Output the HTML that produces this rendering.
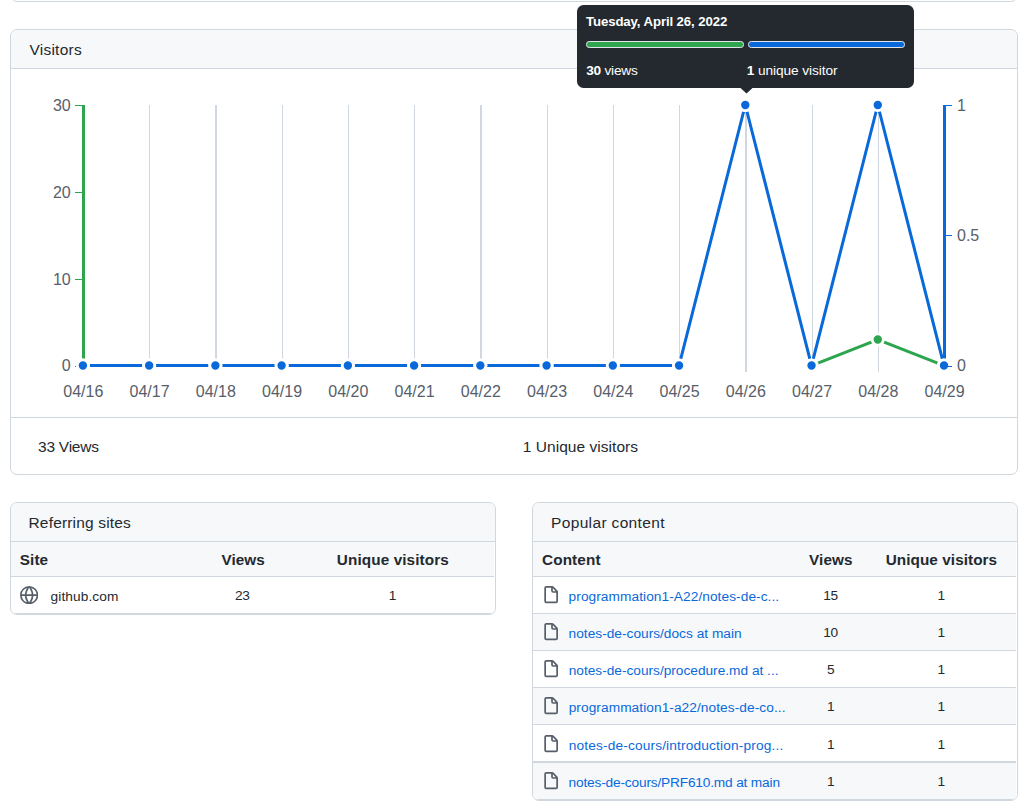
<!DOCTYPE html>
<html><head><meta charset="utf-8"><title>Traffic</title>
<style>
html,body{margin:0;padding:0;background:#fff}
body{width:1030px;height:808px;position:relative;overflow:hidden;font-family:"Liberation Sans",sans-serif;color:#24292f}
.box{position:absolute;box-sizing:border-box;border:1px solid #d0d7de;border-radius:7px;background:#fff}
.hd{position:absolute;left:0;right:0;top:0;background:#f6f8fa;border-bottom:1px solid #d0d7de;border-radius:6px 6px 0 0;box-sizing:border-box}
.t{position:absolute;white-space:nowrap;line-height:20px;font-size:13.7px}
.b{font-weight:bold}
.lnk{color:#0969da}
.tip{color:#fff}
.ax{font-family:"Liberation Sans",sans-serif;font-size:16px;fill:#57606a}
#tip{position:absolute;left:577px;top:5px;width:337px;height:83px;background:#24292f;border-radius:6.5px;color:#fff}
.bar{position:absolute;top:36px;height:7px;box-sizing:border-box;border:1px solid #e1e4e8;border-radius:3.2px}
</style></head><body>
<div class="box" style="left:10px;top:-30px;width:1008px;height:32px"></div>

<div class="box" id="vis" style="left:10px;top:29px;width:1008px;height:446px">
  <div class="hd" style="height:39px"></div>
  <div style="position:absolute;left:0;right:0;top:387px;border-top:1px solid #d0d7de"></div>
</div>
<svg id="chart" width="1030" height="420" viewBox="0 0 1030 420" style="position:absolute;left:0;top:0;overflow:visible">
<rect x="149" y="105" width="1" height="267" fill="#d0d7de"/>
<rect x="215" y="105" width="2" height="267" fill="#d0d7de"/>
<rect x="282" y="105" width="1" height="267" fill="#d0d7de"/>
<rect x="348" y="105" width="1" height="267" fill="#d0d7de"/>
<rect x="414" y="105" width="1" height="267" fill="#d0d7de"/>
<rect x="480" y="105" width="2" height="267" fill="#d0d7de"/>
<rect x="547" y="105" width="1" height="267" fill="#d0d7de"/>
<rect x="613" y="105" width="1" height="267" fill="#d0d7de"/>
<rect x="679" y="105" width="1" height="267" fill="#d0d7de"/>
<rect x="745" y="105" width="2" height="267" fill="#d0d7de"/>
<rect x="812" y="105" width="1" height="267" fill="#d0d7de"/>
<rect x="878" y="105" width="1" height="267" fill="#d0d7de"/>
<rect x="82" y="105" width="3" height="262" fill="#2da44e"/>
<rect x="75" y="105" width="8" height="1" fill="#2da44e"/>
<rect x="75" y="192" width="8" height="1" fill="#2da44e"/>
<rect x="75" y="279" width="8" height="1" fill="#2da44e"/>
<rect x="75" y="366" width="8" height="1" fill="#2da44e"/>
<rect x="943" y="105" width="3" height="262" fill="#0969da"/>
<rect x="945" y="105" width="7" height="1" fill="#0969da"/>
<rect x="945" y="235" width="7" height="1" fill="#0969da"/>
<text x="70.7" y="110.7" text-anchor="end" class="ax">30</text>
<text x="70.7" y="197.7" text-anchor="end" class="ax">20</text>
<text x="70.7" y="284.7" text-anchor="end" class="ax">10</text>
<text x="70.7" y="370.7" text-anchor="end" class="ax">0</text>
<text x="957" y="110.7" text-anchor="start" class="ax">1</text>
<text x="957" y="240.7" text-anchor="start" class="ax">0.5</text>
<text x="957" y="370.7" text-anchor="start" class="ax">0</text>
<text x="83.30" y="396.6" text-anchor="middle" class="ax">04/16</text>
<text x="149.55" y="396.6" text-anchor="middle" class="ax">04/17</text>
<text x="215.80" y="396.6" text-anchor="middle" class="ax">04/18</text>
<text x="282.05" y="396.6" text-anchor="middle" class="ax">04/19</text>
<text x="348.30" y="396.6" text-anchor="middle" class="ax">04/20</text>
<text x="414.55" y="396.6" text-anchor="middle" class="ax">04/21</text>
<text x="480.80" y="396.6" text-anchor="middle" class="ax">04/22</text>
<text x="547.05" y="396.6" text-anchor="middle" class="ax">04/23</text>
<text x="613.30" y="396.6" text-anchor="middle" class="ax">04/24</text>
<text x="679.55" y="396.6" text-anchor="middle" class="ax">04/25</text>
<text x="745.80" y="396.6" text-anchor="middle" class="ax">04/26</text>
<text x="812.05" y="396.6" text-anchor="middle" class="ax">04/27</text>
<text x="878.30" y="396.6" text-anchor="middle" class="ax">04/28</text>
<text x="944.55" y="396.6" text-anchor="middle" class="ax">04/29</text>
<polyline points="811.54,365.55 877.78,339.50 944.02,365.55" fill="none" stroke="#2da44e" stroke-width="3" stroke-linejoin="miter"/>
<polyline points="82.90,365.55 149.14,365.55 215.38,365.55 281.62,365.55 347.86,365.55 414.10,365.55 480.34,365.55 546.58,365.55 612.82,365.55 679.06,365.55 745.30,105.00 811.54,365.55 877.78,105.00 944.02,365.55" fill="none" stroke="#0969da" stroke-width="3" stroke-linejoin="miter"/>
<circle cx="82.90" cy="365.55" r="5.6" fill="#2da44e" stroke="#fff" stroke-width="2.8"/>
<circle cx="149.14" cy="365.55" r="5.6" fill="#2da44e" stroke="#fff" stroke-width="2.8"/>
<circle cx="215.38" cy="365.55" r="5.6" fill="#2da44e" stroke="#fff" stroke-width="2.8"/>
<circle cx="281.62" cy="365.55" r="5.6" fill="#2da44e" stroke="#fff" stroke-width="2.8"/>
<circle cx="347.86" cy="365.55" r="5.6" fill="#2da44e" stroke="#fff" stroke-width="2.8"/>
<circle cx="414.10" cy="365.55" r="5.6" fill="#2da44e" stroke="#fff" stroke-width="2.8"/>
<circle cx="480.34" cy="365.55" r="5.6" fill="#2da44e" stroke="#fff" stroke-width="2.8"/>
<circle cx="546.58" cy="365.55" r="5.6" fill="#2da44e" stroke="#fff" stroke-width="2.8"/>
<circle cx="612.82" cy="365.55" r="5.6" fill="#2da44e" stroke="#fff" stroke-width="2.8"/>
<circle cx="679.06" cy="365.55" r="5.6" fill="#2da44e" stroke="#fff" stroke-width="2.8"/>
<circle cx="745.30" cy="105.00" r="5.6" fill="#2da44e" stroke="#fff" stroke-width="2.8"/>
<circle cx="811.54" cy="365.55" r="5.6" fill="#2da44e" stroke="#fff" stroke-width="2.8"/>
<circle cx="877.78" cy="339.50" r="5.6" fill="#2da44e" stroke="#fff" stroke-width="2.8"/>
<circle cx="944.02" cy="365.55" r="5.6" fill="#2da44e" stroke="#fff" stroke-width="2.8"/>
<circle cx="82.90" cy="365.55" r="5.6" fill="#0969da" stroke="#fff" stroke-width="2.8"/>
<circle cx="149.14" cy="365.55" r="5.6" fill="#0969da" stroke="#fff" stroke-width="2.8"/>
<circle cx="215.38" cy="365.55" r="5.6" fill="#0969da" stroke="#fff" stroke-width="2.8"/>
<circle cx="281.62" cy="365.55" r="5.6" fill="#0969da" stroke="#fff" stroke-width="2.8"/>
<circle cx="347.86" cy="365.55" r="5.6" fill="#0969da" stroke="#fff" stroke-width="2.8"/>
<circle cx="414.10" cy="365.55" r="5.6" fill="#0969da" stroke="#fff" stroke-width="2.8"/>
<circle cx="480.34" cy="365.55" r="5.6" fill="#0969da" stroke="#fff" stroke-width="2.8"/>
<circle cx="546.58" cy="365.55" r="5.6" fill="#0969da" stroke="#fff" stroke-width="2.8"/>
<circle cx="612.82" cy="365.55" r="5.6" fill="#0969da" stroke="#fff" stroke-width="2.8"/>
<circle cx="679.06" cy="365.55" r="5.6" fill="#0969da" stroke="#fff" stroke-width="2.8"/>
<circle cx="745.30" cy="105.00" r="5.6" fill="#0969da" stroke="#fff" stroke-width="2.8"/>
<circle cx="811.54" cy="365.55" r="5.6" fill="#0969da" stroke="#fff" stroke-width="2.8"/>
<circle cx="877.78" cy="105.00" r="5.6" fill="#0969da" stroke="#fff" stroke-width="2.8"/>
<circle cx="944.02" cy="365.55" r="5.6" fill="#0969da" stroke="#fff" stroke-width="2.8"/>
<rect x="945" y="366" width="7" height="1" fill="#0969da"/>
</svg>

<div id="tip">
  <div class="bar" style="left:9px;width:158px;background:#2da44e"></div>
  <div class="bar" style="left:171px;width:157px;background:#0969da"></div>
  <svg style="position:absolute;left:160px;top:83px;overflow:visible" width="20" height="8" viewBox="0 0 20 8"><polygon points="3.5,-0.5 15.5,-0.5 15.5,0 9.5,5.4 3.5,0" fill="#24292f"/></svg>
</div>

<div class="box" id="ref" style="left:10px;top:502px;width:486px;height:113px;overflow:hidden">
  <div class="hd" style="height:74px"></div>
  <div style="position:absolute;left:0;right:0;top:38px;border-top:1px solid #d0d7de"></div>
  <div style="position:absolute;left:0;right:0;top:110px;border-top:1px solid #d0d7de"></div>
  <div style="position:absolute;right:0;width:1px;top:39px;bottom:0;background:#fff"></div>
</div>
<svg style="position:absolute;left:19.8px;top:585.8px" width="18.29" height="18.29" viewBox="0 0 16 16"><path fill="#57606a" fill-rule="evenodd" d="M1.543 7.25h2.733c.144-2.074.866-3.756 1.580-4.948.12-.197.237-.381.353-.552a6.506 6.506 0 0 0-4.666 5.500zm2.733 1.500H1.543a6.506 6.506 0 0 0 4.666 5.500 11.130 11.130 0 0 1-.352-.552c-.715-1.192-1.437-2.874-1.581-4.948zm1.504 0h4.440a9.637 9.637 0 0 1-1.363 4.177c-.306.510-.612.919-.857 1.215a9.978 9.978 0 0 1-.857-1.215A9.637 9.637 0 0 1 5.780 8.750zm4.440-1.500H5.780a9.637 9.637 0 0 1 1.363-4.177c.306-.510.612-.919.857-1.215.245.296.550.705.857 1.215A9.638 9.638 0 0 1 10.220 7.250zm1.504 1.500c-.144 2.074-.866 3.756-1.580 4.948-.12.197-.237.381-.353.552a6.506 6.506 0 0 0 4.666-5.500h-2.733zm2.733-1.500h-2.733c-.144-2.074-.866-3.756-1.580-4.948a11.738 11.738 0 0 0-.353-.552 6.506 6.506 0 0 1 4.666 5.500zM8 0a8 8 0 1 0 0 16A8 8 0 0 0 8 0z"/></svg>

<div class="box" id="pop" style="left:532px;top:502px;width:486px;height:299px;overflow:hidden">
  <div class="hd" style="height:74px"></div>
  <div style="position:absolute;left:0;right:0;top:38px;border-top:1px solid #d0d7de"></div>
  <svg style="position:absolute;left:-533px;top:-503px" width="1030" height="808" viewBox="0 0 1030 808">
<rect x="533" y="577" width="484" height="36" fill="#fff"/>
<rect x="533" y="613" width="484" height="1" fill="#d0d7de"/>
<rect x="533" y="614" width="484" height="36" fill="#f6f8fa"/>
<rect x="533" y="650" width="484" height="1" fill="#d0d7de"/>
<rect x="533" y="651" width="484" height="36" fill="#fff"/>
<rect x="533" y="687" width="484" height="1" fill="#d0d7de"/>
<rect x="533" y="688" width="484" height="36" fill="#f6f8fa"/>
<rect x="533" y="724" width="484" height="1" fill="#d0d7de"/>
<rect x="533" y="725" width="484" height="36" fill="#fff"/>
<rect x="533" y="761" width="484" height="2" fill="#d0d7de"/>
<rect x="533" y="763" width="484" height="36" fill="#f6f8fa"/>
<rect x="533" y="799" width="484" height="1" fill="#d0d7de"/>
<rect x="1016" y="542" width="1" height="258" fill="#fff"/>
</svg>
</div>
<svg style="position:absolute;left:541.9px;top:585.90px" width="18.29" height="18.29" viewBox="0 0 16 16"><path fill="#57606a" fill-rule="evenodd" d="M3.750 1.500a.250.250 0 0 0-.250.250v11.500c0 .138.112.250.250.250h8.500a.250.250 0 0 0 .250-.250V6H9.750A1.750 1.750 0 0 1 8 4.250V1.500H3.750zm5.750.560v2.190c0 .138.112.250.250.250h2.190L9.500 2.060zM2 1.750C2 .784 2.784 0 3.750 0h5.086c.464 0 .909.184 1.237.513l3.414 3.414c.329.328.513.773.513 1.237v8.086A1.750 1.750 0 0 1 12.250 15h-8.500A1.750 1.750 0 0 1 2 13.250V1.750z"/></svg>
<svg style="position:absolute;left:541.9px;top:623.07px" width="18.29" height="18.29" viewBox="0 0 16 16"><path fill="#57606a" fill-rule="evenodd" d="M3.750 1.500a.250.250 0 0 0-.250.250v11.500c0 .138.112.250.250.250h8.500a.250.250 0 0 0 .250-.250V6H9.750A1.750 1.750 0 0 1 8 4.250V1.500H3.750zm5.750.560v2.190c0 .138.112.250.250.250h2.190L9.500 2.060zM2 1.750C2 .784 2.784 0 3.750 0h5.086c.464 0 .909.184 1.237.513l3.414 3.414c.329.328.513.773.513 1.237v8.086A1.750 1.750 0 0 1 12.250 15h-8.500A1.750 1.750 0 0 1 2 13.250V1.750z"/></svg>
<svg style="position:absolute;left:541.9px;top:660.24px" width="18.29" height="18.29" viewBox="0 0 16 16"><path fill="#57606a" fill-rule="evenodd" d="M3.750 1.500a.250.250 0 0 0-.250.250v11.500c0 .138.112.250.250.250h8.500a.250.250 0 0 0 .250-.250V6H9.750A1.750 1.750 0 0 1 8 4.250V1.500H3.750zm5.750.560v2.190c0 .138.112.250.250.250h2.190L9.500 2.060zM2 1.750C2 .784 2.784 0 3.750 0h5.086c.464 0 .909.184 1.237.513l3.414 3.414c.329.328.513.773.513 1.237v8.086A1.750 1.750 0 0 1 12.250 15h-8.500A1.750 1.750 0 0 1 2 13.250V1.750z"/></svg>
<svg style="position:absolute;left:541.9px;top:697.41px" width="18.29" height="18.29" viewBox="0 0 16 16"><path fill="#57606a" fill-rule="evenodd" d="M3.750 1.500a.250.250 0 0 0-.250.250v11.500c0 .138.112.250.250.250h8.500a.250.250 0 0 0 .250-.250V6H9.750A1.750 1.750 0 0 1 8 4.250V1.500H3.750zm5.750.560v2.190c0 .138.112.250.250.250h2.190L9.500 2.060zM2 1.750C2 .784 2.784 0 3.750 0h5.086c.464 0 .909.184 1.237.513l3.414 3.414c.329.328.513.773.513 1.237v8.086A1.750 1.750 0 0 1 12.250 15h-8.500A1.750 1.750 0 0 1 2 13.250V1.750z"/></svg>
<svg style="position:absolute;left:541.9px;top:734.58px" width="18.29" height="18.29" viewBox="0 0 16 16"><path fill="#57606a" fill-rule="evenodd" d="M3.750 1.500a.250.250 0 0 0-.250.250v11.500c0 .138.112.250.250.250h8.500a.250.250 0 0 0 .250-.250V6H9.750A1.750 1.750 0 0 1 8 4.250V1.500H3.750zm5.750.560v2.190c0 .138.112.250.250.250h2.190L9.500 2.060zM2 1.750C2 .784 2.784 0 3.750 0h5.086c.464 0 .909.184 1.237.513l3.414 3.414c.329.328.513.773.513 1.237v8.086A1.750 1.750 0 0 1 12.250 15h-8.500A1.750 1.750 0 0 1 2 13.250V1.750z"/></svg>
<svg style="position:absolute;left:541.9px;top:771.75px" width="18.29" height="18.29" viewBox="0 0 16 16"><path fill="#57606a" fill-rule="evenodd" d="M3.750 1.500a.250.250 0 0 0-.250.250v11.500c0 .138.112.250.250.250h8.500a.250.250 0 0 0 .250-.250V6H9.750A1.750 1.750 0 0 1 8 4.250V1.500H3.750zm5.750.560v2.190c0 .138.112.250.250.250h2.190L9.500 2.060zM2 1.750C2 .784 2.784 0 3.750 0h5.086c.464 0 .909.184 1.237.513l3.414 3.414c.329.328.513.773.513 1.237v8.086A1.750 1.750 0 0 1 12.250 15h-8.500A1.750 1.750 0 0 1 2 13.250V1.750z"/></svg>
<div class="t h" id="tv" style="left:29.41px;top:40px;font-size:15.5px;letter-spacing:0.249px">Visitors</div>
<div class="t h" id="f1" style="left:38.02px;top:437px;font-size:15.5px;letter-spacing:-0.239px">33 Views</div>
<div class="t h" id="f2" style="left:522.76px;top:437px;font-size:15.5px;letter-spacing:0.046px">1 Unique visitors</div>
<div class="t h" id="rt" style="left:28.50px;top:513px;font-size:15.5px;letter-spacing:0.170px">Referring sites</div>
<div class="t h" id="pt" style="left:551.00px;top:513px;font-size:15.5px;letter-spacing:0.352px">Popular content</div>
<div class="t b" id="rs" style="left:19.83px;top:550px;font-size:15.3px;letter-spacing:0.061px">Site</div>
<div class="t b" id="rv" style="left:221.43px;top:550px;font-size:15.3px;letter-spacing:0.043px">Views</div>
<div class="t b" id="ru" style="left:336.86px;top:550px;font-size:15.3px;letter-spacing:0.100px">Unique visitors</div>
<div class="t b" id="pc" style="left:542.04px;top:550px;font-size:15.3px;letter-spacing:0.119px">Content</div>
<div class="t b" id="pv" style="left:808.99px;top:550px;font-size:15.3px;letter-spacing:0.133px">Views</div>
<div class="t b" id="pu" style="left:885.73px;top:550px;font-size:15.3px;letter-spacing:0.064px">Unique visitors</div>
<div class="t " id="gh" style="left:50.62px;top:587px;font-size:13.7px;letter-spacing:0.092px">github.com</div>
<div class="t " id="g1" style="left:235.11px;top:586px;font-size:13.7px;letter-spacing:-0.400px">23</div>
<div class="t " id="g2" style="left:388.82px;top:586px;font-size:13.7px;letter-spacing:0.000px">1</div>
<div class="t lnk" id="l0" style="left:568.59px;top:587px;font-size:13.7px;letter-spacing:0.068px">programmation1-A22/notes-de-c...</div>
<div class="t lnk" id="l1" style="left:568.58px;top:624px;font-size:13.7px;letter-spacing:0.013px">notes-de-cours/docs at main</div>
<div class="t lnk" id="l2" style="left:568.68px;top:661px;font-size:13.7px;letter-spacing:-0.005px">notes-de-cours/procedure.md at ...</div>
<div class="t lnk" id="l3" style="left:568.69px;top:698px;font-size:13.7px;letter-spacing:0.069px">programmation1-a22/notes-de-co...</div>
<div class="t lnk" id="l4" style="left:568.68px;top:736px;font-size:13.7px;letter-spacing:0.156px">notes-de-cours/introduction-prog...</div>
<div class="t lnk" id="l5" style="left:568.58px;top:773px;font-size:13.7px;letter-spacing:-0.174px">notes-de-cours/PRF610.md at main</div>
<div class="t " id="v0" style="left:823.30px;top:586px;font-size:13.7px;letter-spacing:-0.400px">15</div>
<div class="t " id="v1" style="left:823.33px;top:623px;font-size:13.7px;letter-spacing:-0.400px">10</div>
<div class="t " id="v2" style="left:827.03px;top:660px;font-size:13.7px;letter-spacing:0.000px">5</div>
<div class="t " id="v3" style="left:827.10px;top:697px;font-size:13.7px;letter-spacing:0.000px">1</div>
<div class="t " id="v4" style="left:827.10px;top:735px;font-size:13.7px;letter-spacing:0.000px">1</div>
<div class="t " id="v5" style="left:827.10px;top:772px;font-size:13.7px;letter-spacing:0.000px">1</div>
<div class="t " id="u0" style="left:937.52px;top:586px;font-size:13.7px;letter-spacing:0.000px">1</div>
<div class="t " id="u1" style="left:937.54px;top:623px;font-size:13.7px;letter-spacing:0.000px">1</div>
<div class="t " id="u2" style="left:937.52px;top:660px;font-size:13.7px;letter-spacing:0.000px">1</div>
<div class="t " id="u3" style="left:937.54px;top:697px;font-size:13.7px;letter-spacing:0.000px">1</div>
<div class="t " id="u4" style="left:937.52px;top:735px;font-size:13.7px;letter-spacing:0.000px">1</div>
<div class="t " id="u5" style="left:937.54px;top:772px;font-size:13.7px;letter-spacing:0.000px">1</div>
<div class="t b tip" id="tt" style="left:586.00px;top:12px;font-size:13.2px;letter-spacing:-0.098px">Tuesday, April 26, 2022</div>
<div class="t tip" id="t1" style="left:586.24px;top:61px;font-size:13.7px;letter-spacing:-0.252px"><b>30</b> views</div>
<div class="t tip" id="t2" style="left:746.73px;top:61px;font-size:13.7px;letter-spacing:-0.079px"><b>1</b> unique visitor</div>
</body></html>
